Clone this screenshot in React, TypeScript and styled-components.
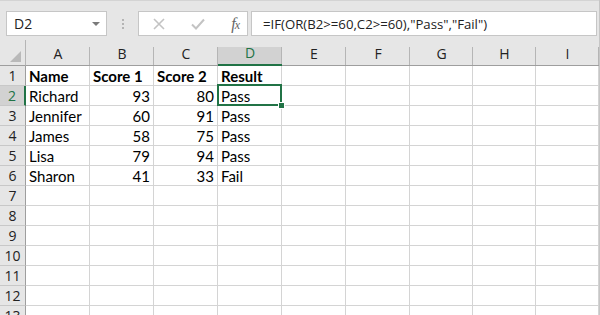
import React from 'react'
import styled, { createGlobalStyle } from 'styled-components'

const GlobalStyle = createGlobalStyle`
  html, body {
    margin: 0;
    padding: 0;
    background: #fff;
  }
`

const Sheet = styled.div`
  width: 600px;
  height: 315px;
  overflow: hidden;
  background: #fff;
  border-right: 1px solid #c6c6c6;
  box-sizing: border-box;
`

const Toolbar = styled.div`
  display: flex;
  align-items: center;
  height: 40px;
  padding: 10px 2px 4px 6px;
  box-sizing: border-box;
  background: #e6e6e6;
  border-top: 1px solid #d4d4d4;
`

const NameBox = styled.div`
  display: flex;
  align-items: center;
  justify-content: space-between;
  width: 101px;
  height: 25px;
  padding: 0 6px 0 7px;
  box-sizing: border-box;
  background: #fff;
  border: 1px solid #c6c6c6;
  font-family: 'Open Sans', 'Noto Sans', sans-serif;
  font-size: 14px;
  color: #222;
`

const Caret = styled.span`
  width: 0;
  height: 0;
  border-left: 4px solid transparent;
  border-right: 4px solid transparent;
  border-top: 4px solid #7a7a7a;
`

const Grip = styled.div`
  display: flex;
  flex-direction: column;
  gap: 2px;
  margin: 0 14px 0 15px;

  span {
    width: 2px;
    height: 2px;
    background: #b4b4b4;
  }
`

const FxBox = styled.div`
  display: flex;
  align-items: center;
  justify-content: space-between;
  width: 110px;
  height: 25px;
  padding: 0 8px 0 14px;
  box-sizing: border-box;
  background: #fff;
  border: 1px solid #c6c6c6;
  margin-right: 3px;
`

const Fx = styled.span`
  font-family: 'Liberation Serif', serif;
  font-style: italic;
  font-size: 16px;
  color: #666;
  letter-spacing: -1px;

  small {
    font-size: 12px;
  }
`

const Formula = styled.div`
  flex: 1;
  height: 25px;
  display: flex;
  align-items: center;
  padding-left: 11px;
  box-sizing: border-box;
  background: #fff;
  border: 1px solid #c6c6c6;
  font-family: 'Open Sans', 'Noto Sans', sans-serif;
  font-size: 13.2px;
  color: #222;
  white-space: nowrap;
`

const Grid = styled.div`
  display: grid;
  grid-template-columns: 26px repeat(6, 64px) repeat(3, 63px);
  grid-template-rows: 26px;
  grid-auto-rows: 20px;
`

const Corner = styled.div`
  background: #e6e6e6;
  border-right: 1px solid #b5b5b5;
  border-bottom: 1px solid #9e9e9e;
  box-sizing: border-box;
  display: flex;
  align-items: flex-end;
  justify-content: flex-end;
  padding: 0 4px 3px 0;

  &::after {
    content: '';
    width: 0;
    height: 0;
    border-left: 11px solid transparent;
    border-bottom: 11px solid #b9b9b9;
  }
`

const ColHead = styled.div<{ $active?: boolean }>`
  position: relative;
  display: flex;
  align-items: flex-end;
  justify-content: center;
  padding-bottom: 2px;
  box-sizing: border-box;
  background: ${(p) => (p.$active ? '#d2d2d2' : '#e6e6e6')};
  border-bottom: ${(p) => (p.$active ? '2px solid #217346' : '1px solid #9e9e9e')};
  box-shadow: inset -1px 0 0 #b5b5b5;
  font-family: 'Open Sans', 'Noto Sans', sans-serif;
  font-size: 14px;
  color: ${(p) => (p.$active ? '#217346' : '#222')};

  &::before {
    content: '';
    position: absolute;
    left: 0;
    right: 0;
    top: 0;
    height: 7px;
    background: #e6e6e6;
  }
`

const RowHead = styled.div<{ $active?: boolean }>`
  display: flex;
  align-items: center;
  justify-content: center;
  box-sizing: border-box;
  background: ${(p) => (p.$active ? '#d2d2d2' : '#e6e6e6')};
  border-right: ${(p) => (p.$active ? '2px solid #217346' : '1px solid #9e9e9e')};
  border-bottom: 1px solid #c8c8c8;
  font-family: 'Open Sans', 'Noto Sans', sans-serif;
  font-size: 14px;
  color: ${(p) => (p.$active ? '#217346' : '#222')};
`

const Cell = styled.div<{ $num?: boolean; $bold?: boolean }>`
  position: relative;
  display: flex;
  align-items: center;
  justify-content: ${(p) => (p.$num ? 'flex-end' : 'flex-start')};
  padding: 0 3px;
  box-sizing: border-box;
  border-right: 1px solid #d4d4d4;
  border-bottom: 1px solid #d4d4d4;
  font-family: Lato, 'Liberation Sans', sans-serif;
  font-size: 15px;
  font-weight: ${(p) => (p.$bold ? 700 : 400)};
  color: #000;
  white-space: nowrap;
`

const Selection = styled.div`
  position: absolute;
  left: -1px;
  top: -2px;
  right: -1px;
  bottom: -1px;
  border: 2px solid #217346;
  pointer-events: none;
  z-index: 2;

  &::after {
    content: '';
    position: absolute;
    right: -5px;
    bottom: -5px;
    width: 5px;
    height: 5px;
    background: #217346;
    border: 1px solid #fff;
  }
`

const columns = ['A', 'B', 'C', 'D', 'E', 'F', 'G', 'H', 'I']

type Row = [string, string, string, string]

const data: Row[] = [
  ['Name', 'Score 1', 'Score 2', 'Result'],
  ['Richard', '93', '80', 'Pass'],
  ['Jennifer', '60', '91', 'Pass'],
  ['James', '58', '75', 'Pass'],
  ['Lisa', '79', '94', 'Pass'],
  ['Sharon', '41', '33', 'Fail'],
]

const XIcon = () => (
  <svg width="12" height="12" viewBox="0 0 12 12">
    <path d="M1 1 L11 11 M11 1 L1 11" stroke="#c3c3c3" strokeWidth="1.6" fill="none" />
  </svg>
)

const CheckIcon = () => (
  <svg width="14" height="12" viewBox="0 0 14 12">
    <path d="M1 6.5 L5 10.5 L13 1.5" stroke="#c3c3c3" strokeWidth="2" fill="none" />
  </svg>
)

const App: React.FC = () => {
  const totalRows = 13

  return (
    <Sheet>
      <GlobalStyle />
      <Toolbar>
        <NameBox>
          D2
          <Caret />
        </NameBox>
        <Grip>
          <span />
          <span />
          <span />
        </Grip>
        <FxBox>
          <XIcon />
          <CheckIcon />
          <Fx>
            f<small>x</small>
          </Fx>
        </FxBox>
        <Formula>=IF(OR(B2&gt;=60,C2&gt;=60),"Pass","Fail")</Formula>
      </Toolbar>
      <Grid>
        <Corner />
        {columns.map((c) => (
          <ColHead key={c} $active={c === 'D'}>
            {c}
          </ColHead>
        ))}
        {Array.from({ length: totalRows }, (_, r) => {
          const row = data[r]
          return (
            <React.Fragment key={r}>
              <RowHead $active={r === 1}>{r + 1}</RowHead>
              {columns.map((c, ci) => {
                const value = row && ci < 4 ? row[ci] : ''
                const isNum = r > 0 && (ci === 1 || ci === 2)
                const selected = r === 1 && ci === 3
                return (
                  <Cell key={c} $num={isNum} $bold={r === 0}>
                    {value}
                    {selected && <Selection />}
                  </Cell>
                )
              })}
            </React.Fragment>
          )
        })}
      </Grid>
    </Sheet>
  )
}

export default App
